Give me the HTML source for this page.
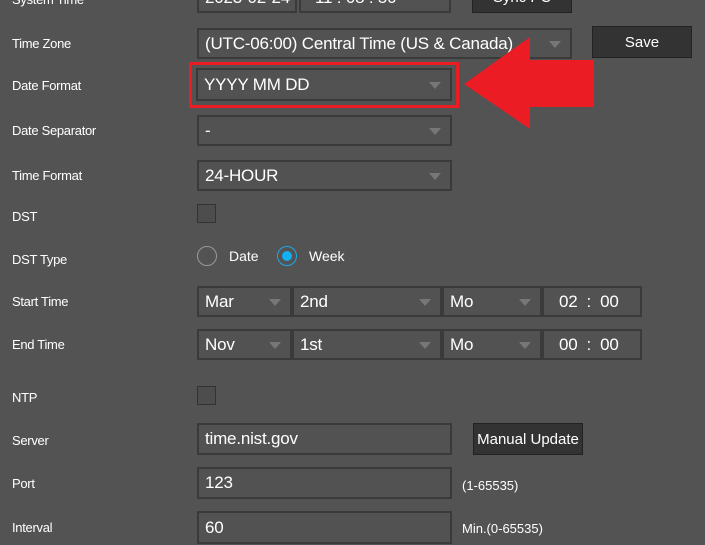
<!DOCTYPE html>
<html><head><style>
body{margin:0;width:705px;height:545px;background:#535353;overflow:hidden;position:relative;font-family:"Liberation Sans",Arial,sans-serif;color:#fff}
.l{position:absolute;left:12px;font-size:13px;letter-spacing:-0.3px;line-height:14px;margin-top:1px}
.b{position:absolute;box-sizing:border-box;border:2px solid #3a3a3a;background:#525252;font-size:17px;padding-left:6px;display:flex;align-items:center;letter-spacing:-0.2px}
.a::after{content:"";position:absolute;right:9px;top:50%;margin-top:-3px;border-left:6px solid transparent;border-right:6px solid transparent;border-top:7px solid #777}
.btn{position:absolute;box-sizing:border-box;background:#333;border:1px solid #222;font-size:15px;display:flex;align-items:center;justify-content:center}
.cb{position:absolute;width:19px;height:19px;box-sizing:border-box;border:1px solid #333;background:#4d4d4d}
.t{position:absolute;font-size:13px}
</style></head><body>
<div class="l" style="top:-8px">System Time</div>
<div class="b" style="left:197px;top:-18px;width:100px;height:31px">2023-02-24</div>
<div class="b" style="left:299px;top:-18px;width:152px;height:31px;padding-left:14px">11 : 08 : 50</div>
<div class="btn" style="left:472px;top:-18px;width:100px;height:31px">Sync PC</div>

<div class="l" style="top:36px">Time Zone</div>
<div class="b a" style="left:197px;top:28px;width:375px;height:31px">(UTC-06:00) Central Time (US &amp; Canada)</div>
<div class="btn" style="left:592px;top:26px;width:100px;height:32px">Save</div>

<div style="position:absolute;left:189px;top:62px;width:270px;height:46px;box-sizing:border-box;border:3px solid #ec1c24"></div>
<div class="l" style="top:78px">Date Format</div>
<div class="b a" style="left:196px;top:68px;width:256px;height:33px">YYYY MM DD</div>
<svg style="position:absolute;left:0;top:0" width="705" height="545"><polygon points="464,84 530,37 530,60 594,60 594,107 530,107 530,129" fill="#ec1c24"/></svg>

<div class="l" style="top:123px">Date Separator</div>
<div class="b a" style="left:197px;top:115px;width:255px;height:31px">-</div>
<div class="l" style="top:168px">Time Format</div>
<div class="b a" style="left:197px;top:160px;width:255px;height:31px">24-HOUR</div>
<div class="l" style="top:209px">DST</div>
<div class="cb" style="left:197px;top:204px"></div>
<div class="l" style="top:252px">DST Type</div>
<div style="position:absolute;left:197px;top:246px;width:20px;height:20px;box-sizing:border-box;border:1px solid #999;border-radius:50%"></div>
<div class="t" style="left:229px;top:248px;font-size:14px">Date</div>
<div style="position:absolute;left:277px;top:246px;width:20px;height:20px;box-sizing:border-box;border:1px solid #1aa9e8;border-radius:50%"><div style="position:absolute;left:4px;top:4px;width:10px;height:10px;border-radius:50%;background:#12b0f2"></div></div>
<div class="t" style="left:309px;top:248px;font-size:14px">Week</div>

<div class="l" style="top:294px">Start Time</div>
<div class="b a" style="left:197px;top:286px;width:95px;height:31px">Mar</div>
<div class="b a" style="left:292px;top:286px;width:150px;height:31px">2nd</div>
<div class="b a" style="left:442px;top:286px;width:100px;height:31px">Mo</div>
<div class="b" style="left:542px;top:286px;width:100px;height:31px;padding-left:15px">02 &nbsp;:&nbsp; 00</div>
<div class="l" style="top:337px">End Time</div>
<div class="b a" style="left:197px;top:329px;width:95px;height:31px">Nov</div>
<div class="b a" style="left:292px;top:329px;width:150px;height:31px">1st</div>
<div class="b a" style="left:442px;top:329px;width:100px;height:31px">Mo</div>
<div class="b" style="left:542px;top:329px;width:100px;height:31px;padding-left:15px">00 &nbsp;:&nbsp; 00</div>

<div class="l" style="top:390px">NTP</div>
<div class="cb" style="left:197px;top:386px"></div>
<div class="l" style="top:433px">Server</div>
<div class="b" style="left:197px;top:423px;width:255px;height:32px">time.nist.gov</div>
<div class="btn" style="left:473px;top:423px;width:110px;height:32px;font-size:15px">Manual Update</div>
<div class="l" style="top:476px">Port</div>
<div class="b" style="left:197px;top:467px;width:255px;height:32px">123</div>
<div class="t" style="left:462px;top:478px">(1-65535)</div>
<div class="l" style="top:520px">Interval</div>
<div class="b" style="left:197px;top:511px;width:255px;height:33px">60</div>
<div class="t" style="left:462px;top:521px">Min.(0-65535)</div>
</body></html>
